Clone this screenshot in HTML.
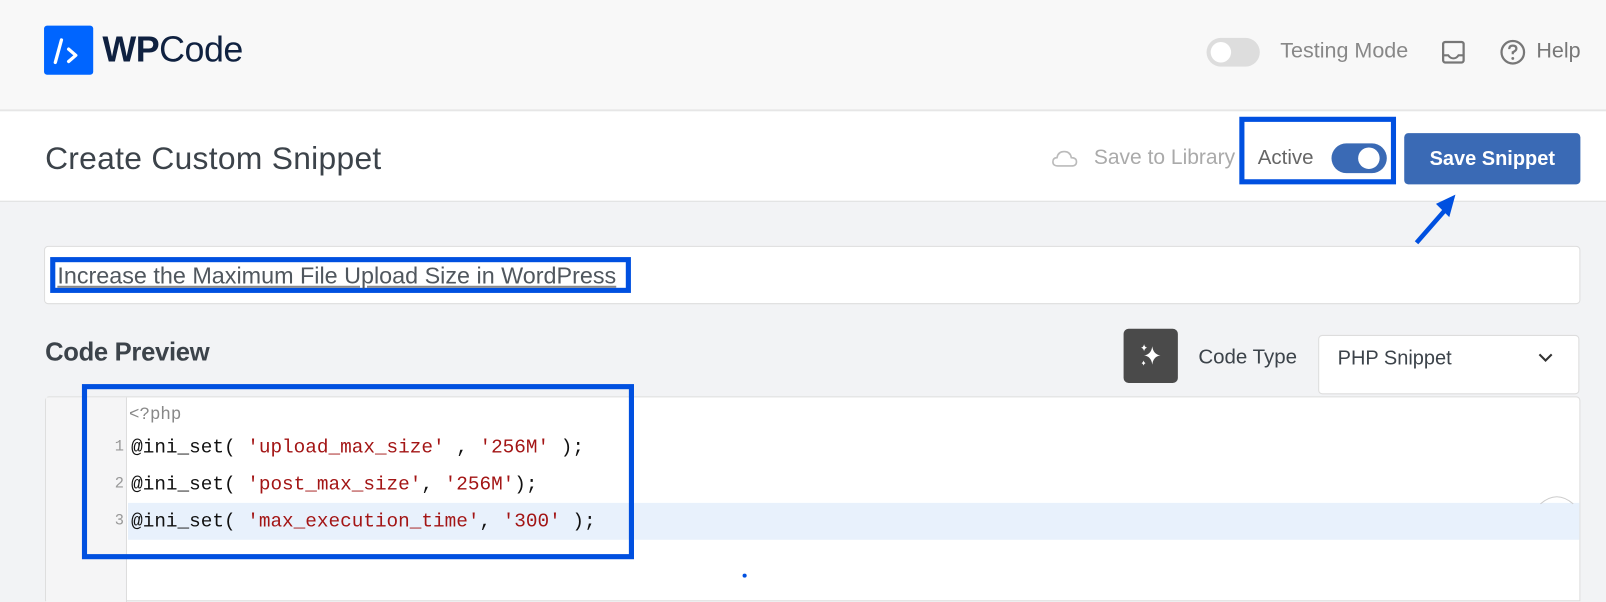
<!DOCTYPE html>
<html><head><meta charset="utf-8"><style>
*{box-sizing:border-box;margin:0;padding:0}
html,body{width:1606px;height:595px;overflow:hidden;background:#f2f3f5;font-family:"Liberation Sans",sans-serif}
#w{position:absolute;left:0;top:0;width:1568px;height:581px;transform:scale(1.02423);transform-origin:0 0;background:#f2f3f5}
.a{position:absolute;white-space:nowrap}
</style></head><body><div id="w">
<div class="a" style="left:0;top:0;width:1568px;height:108px;background:#f8f8f8;border-bottom:1px solid #ddd"></div>
<div class="a" style="left:43px;top:25px;width:48px;height:48px;background:#0065ff;border-radius:3px"></div>
<svg class="a" style="left:43px;top:25px" width="48" height="48"><path d="M17 14 L11 36 M24 23 L31 29 L24 35" stroke="#fff" stroke-width="3.2" fill="none" stroke-linecap="round" stroke-linejoin="round"/></svg>
<div class="a" style="left:100px;top:29px;font-size:35px;color:#0f2140;letter-spacing:-0.5px;line-height:40px"><b>WP</b>Code</div>
<div class="a" style="left:1178px;top:37px;width:52px;height:28px;border-radius:14px;background:#ddd"></div>
<div class="a" style="left:1182px;top:41px;width:20px;height:20px;border-radius:10px;background:#fff"></div>
<div class="a" style="left:1250px;top:38px;font-size:21px;color:#888">Testing Mode</div>
<svg class="a" style="left:1407px;top:39px" width="24" height="24"><rect x="2" y="2" width="20" height="20" rx="2" fill="none" stroke="#777" stroke-width="2.2"/><path d="M2 15 H7 Q9 18 12 18 Q15 18 17 15 H22" fill="none" stroke="#777" stroke-width="2"/></svg>
<svg class="a" style="left:1464px;top:38px" width="26" height="26"><circle cx="13" cy="13" r="11" fill="none" stroke="#777" stroke-width="2.2"/><path d="M9.5 10 Q9.5 6.5 13 6.5 Q16.5 6.5 16.5 9.5 Q16.5 11.5 13 13 V15" fill="none" stroke="#777" stroke-width="2.2"/><circle cx="13" cy="19" r="1.4" fill="#777"/></svg>
<div class="a" style="left:1500px;top:38px;font-size:21px;color:#777">Help</div>

<div class="a" style="left:0;top:109px;width:1568px;height:88px;background:#fff;border-bottom:1px solid #ddd"></div>
<div class="a" style="left:44px;top:137px;font-size:31px;letter-spacing:0.3px;color:#3c434a">Create Custom Snippet</div>
<svg class="a" style="left:1027px;top:146px" width="26" height="18"><path d="M6 16 Q1 16 1 12 Q1 8 5 8 Q6 2 12 2 Q18 2 19 8 Q24 8 24 12 Q24 16 19 16 Z" fill="none" stroke="#bbb" stroke-width="1.6"/></svg>
<div class="a" style="left:1068px;top:142px;font-size:20.5px;color:#aaa">Save to Library</div>
<div class="a" style="left:1210px;top:114px;width:153px;height:66px;border:5px solid #0050e0"></div>
<div class="a" style="left:1228px;top:143px;font-size:20px;color:#666">Active</div>
<div class="a" style="left:1300px;top:140px;width:54px;height:29px;border-radius:15px;background:#3a6ab5"></div>
<div class="a" style="left:1326px;top:144px;width:21px;height:21px;border-radius:11px;background:#fff"></div>
<div class="a" style="left:1371px;top:130px;width:172px;height:50px;border-radius:4px;background:#3a6ab5;color:#fff;font-weight:bold;font-size:19.5px;text-align:center;line-height:50px">Save Snippet</div>
<svg class="a" style="left:1375px;top:185px" width="60" height="60"><path d="M8 52 L36 20" stroke="#0050e0" stroke-width="4.5"/><path d="M27 14 L46 5 L40 27 Z" fill="#0050e0"/></svg>

<div class="a" style="left:43px;top:240px;width:1500px;height:57px;background:#fff;border:1px solid #ddd;border-radius:4px"></div>
<div class="a" style="left:49px;top:251px;width:567px;height:35px;border:5px solid #0050e0"></div>
<div class="a" style="left:56px;top:256px;font-size:22.8px;color:#50575e;text-decoration:underline;text-decoration-color:#888">Increase the Maximum File Upload Size in WordPress</div>

<div class="a" style="left:44px;top:330px;font-size:25px;color:#3c434a;font-weight:bold;letter-spacing:-0.3px">Code Preview</div>
<div class="a" style="left:1097px;top:321px;width:53px;height:53px;border-radius:5px;background:#4a4a4a"></div>
<svg class="a" style="left:1097px;top:321px" width="53" height="53"><path d="M28 17 Q29 25 36 26 Q29 27 28 35 Q27 27 20 26 Q27 25 28 17Z" fill="#fff"/><path d="M20 15 Q20.5 18 23 18.5 Q20.5 19 20 22 Q19.5 19 17 18.5 Q19.5 18 20 15Z" fill="#fff"/><path d="M19.5 31 Q20 33 21.5 33.5 Q20 34 19.5 36 Q19 34 17.5 33.5 Q19 33 19.5 31Z" fill="#fff"/></svg>
<div class="a" style="left:1170px;top:338px;font-size:20px;color:#3c434a">Code Type</div>
<div class="a" style="left:1287px;top:327px;width:255px;height:58px;background:#fff;border:1px solid #ddd;border-radius:4px"></div>
<div class="a" style="left:1306px;top:339px;font-size:19.5px;color:#3c434a">PHP Snippet</div>
<svg class="a" style="left:1500px;top:343px" width="18" height="12"><path d="M3 3 L9 9 L15 3" fill="none" stroke="#333" stroke-width="2"/></svg>

<div class="a" style="left:44px;top:387px;width:1499px;height:200px;background:#fff;border:1px solid #ddd;border-radius:4px 4px 0 0"></div>
<div class="a" style="left:45px;top:388px;width:79px;height:200px;background:#f5f5f6;border-right:1px solid #ddd"></div>
<div class="a" style="left:125px;top:491px;width:1417px;height:36px;background:#e8f1fc"></div>
<svg class="a" style="left:1500px;top:482px" width="40" height="12"><path d="M4 10 Q20 -4 36 10" fill="none" stroke="#ccc" stroke-width="1"/></svg>
<div class="a" style="left:80px;top:375px;width:539px;height:171px;border:5px solid #0050e0"></div>
<div class="a" style="left:0;top:394px;font-family:'Liberation Mono',monospace;font-size:18.9px;line-height:36px;white-space:pre">
<div style="position:absolute;left:126px;top:0;color:#888;font-size:17px;line-height:24px">&lt;?php</div>
<div style="position:absolute;left:112px;top:25px;color:#999;font-size:15px">1</div><div style="position:absolute;left:128px;top:25px;color:#111">@ini_set( <span style="color:#a31515">'upload_max_size'</span> , <span style="color:#a31515">'256M'</span> );</div>
<div style="position:absolute;left:112px;top:61px;color:#999;font-size:15px">2</div><div style="position:absolute;left:128px;top:61px;color:#111">@ini_set( <span style="color:#a31515">'post_max_size'</span>, <span style="color:#a31515">'256M'</span>);</div>
<div style="position:absolute;left:112px;top:97px;color:#999;font-size:15px">3</div><div style="position:absolute;left:128px;top:97px;color:#111">@ini_set( <span style="color:#a31515">'max_execution_time'</span>, <span style="color:#a31515">'300'</span> );</div>
</div>
<div class="a" style="left:725px;top:560px;width:4px;height:4px;border-radius:2px;background:#0050e0"></div>
</div></body></html>
